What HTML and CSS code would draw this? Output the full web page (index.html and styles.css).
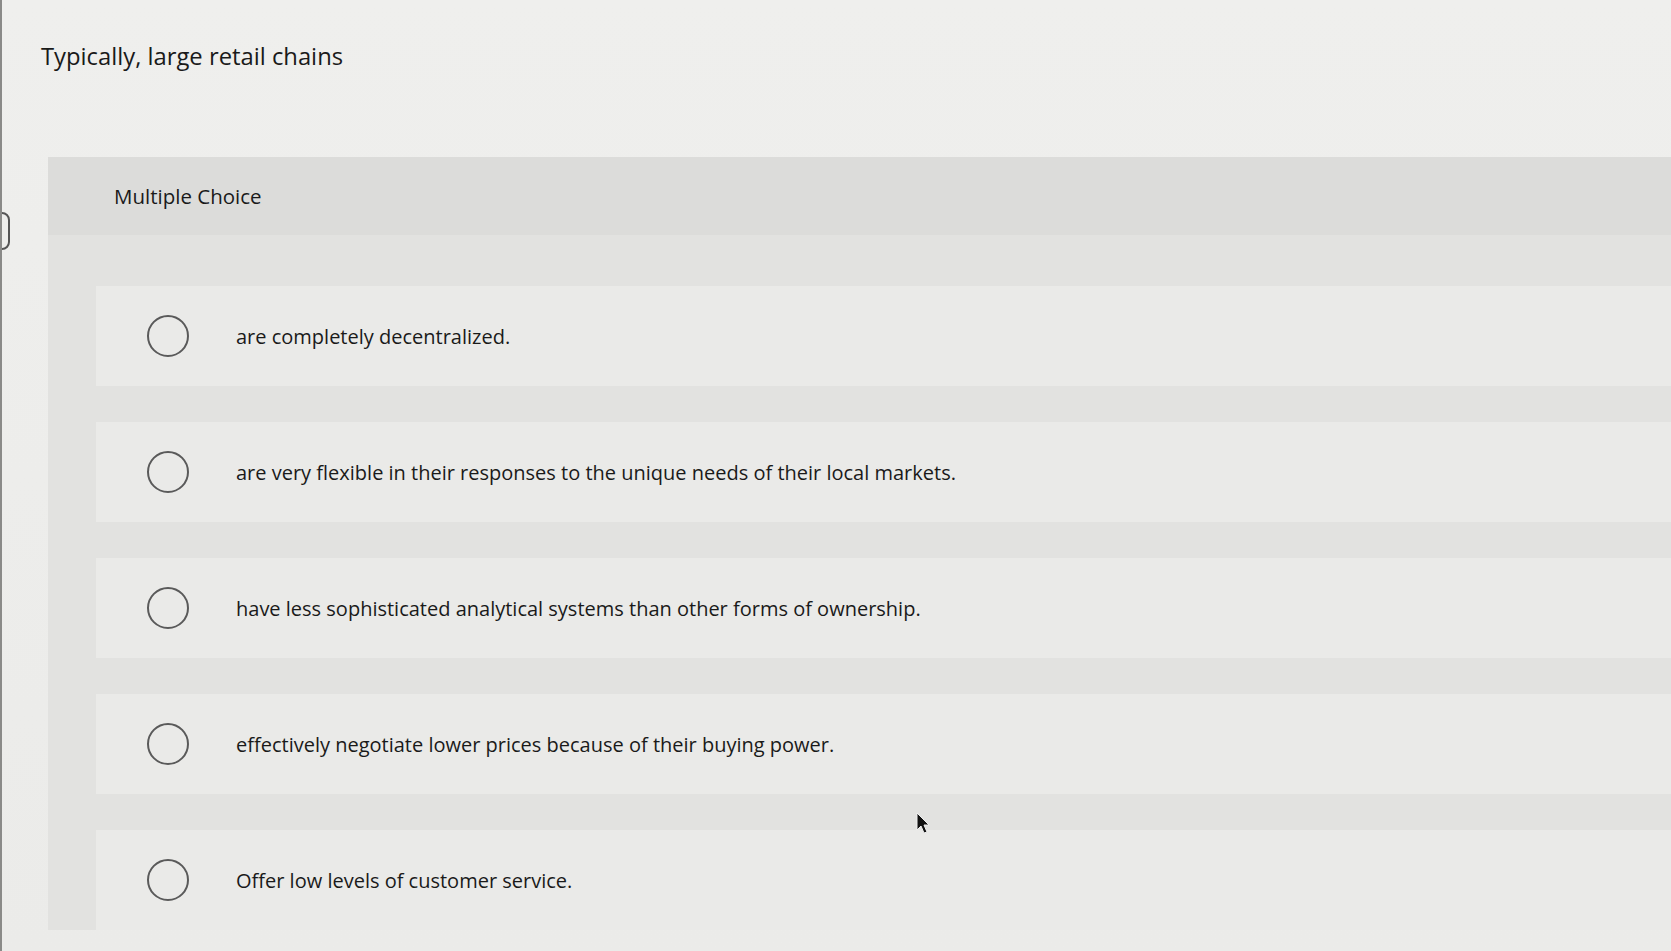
FILE: index.html
```html
<!DOCTYPE html>
<html lang="en">
<head>
<meta charset="utf-8">
<title>Multiple Choice</title>
<link rel="stylesheet" href="styles.css">
</head>
<body>
<div class="screen">
  <h1 class="question">Typically, large retail chains</h1>
  <section class="panel">
    <div class="panel-header">Multiple Choice</div>
    <div class="options">
      <label class="option"><span class="radio"></span><span class="option-text">are completely decentralized.</span></label>
      <label class="option"><span class="radio"></span><span class="option-text">are very flexible in their responses to the unique needs of their local markets.</span></label>
      <label class="option"><span class="radio"></span><span class="option-text">have less sophisticated analytical systems than other forms of ownership.</span></label>
      <label class="option"><span class="radio"></span><span class="option-text">effectively negotiate lower prices because of their buying power.</span></label>
      <label class="option"><span class="radio"></span><span class="option-text">Offer low levels of customer service.</span></label>
    </div>
  </section>
  <svg class="cursor" width="16" height="24" viewBox="0 0 16 24"><path d="M1 1 L1 18 L5 14 L8 21 L11 20 L8 13 L13 13 Z" fill="#111" stroke="#eee" stroke-width="1"/></svg>
  <span class="edge-mark"></span>
</div>
</body>
</html>
```
FILE: styles.css
```css
html, body {
  margin: 0;
  padding: 0;
}
body {
  background: #ececea;
  font-family: "Open Sans", Lato, "Liberation Sans", sans-serif;
  color: #1a1a1a;
}
.screen {
  position: relative;
  width: 1671px;
  height: 951px;
  overflow: hidden;
  border-left: 2px solid #8a8a88;
  box-sizing: border-box;
  background: linear-gradient(180deg, #efefed 0%, #ebebe9 100%);
}
.question {
  margin: 0;
  padding: 40px 0 0 39px;
  font-size: 23.8px;
  font-weight: 500;
  line-height: 32px;
  color: #1a1a1a;
}
.panel {
  margin: 85px 0 0 46px;
  background: #e2e2e0;
}
.panel-header {
  height: 78px;
  display: flex;
  align-items: center;
  padding-left: 66px;
  font-size: 20.5px;
  font-weight: 500;
  background: #dcdcda;
  color: #1a1a1a;
}
.options {
  display: flex;
  flex-direction: column;
  gap: 36px;
  padding: 51px 0 0 48px;
}
.option {
  display: flex;
  align-items: center;
  height: 100px;
  padding-left: 51px;
  background: #eaeae8;
}
.radio {
  width: 38px;
  height: 38px;
  border: 2px solid #5a5a5a;
  border-radius: 50%;
  flex: none;
}
.option-text {
  margin-left: 47px;
  font-size: 20px;
  font-weight: 500;
  color: #1a1a1a;
}
.cursor {
  position: absolute;
  left: 914px;
  top: 812px;
}
.edge-mark {
  position: absolute;
  left: -8px;
  top: 212px;
  width: 12px;
  height: 34px;
  border: 2px solid #555;
  border-radius: 8px;
}
```
